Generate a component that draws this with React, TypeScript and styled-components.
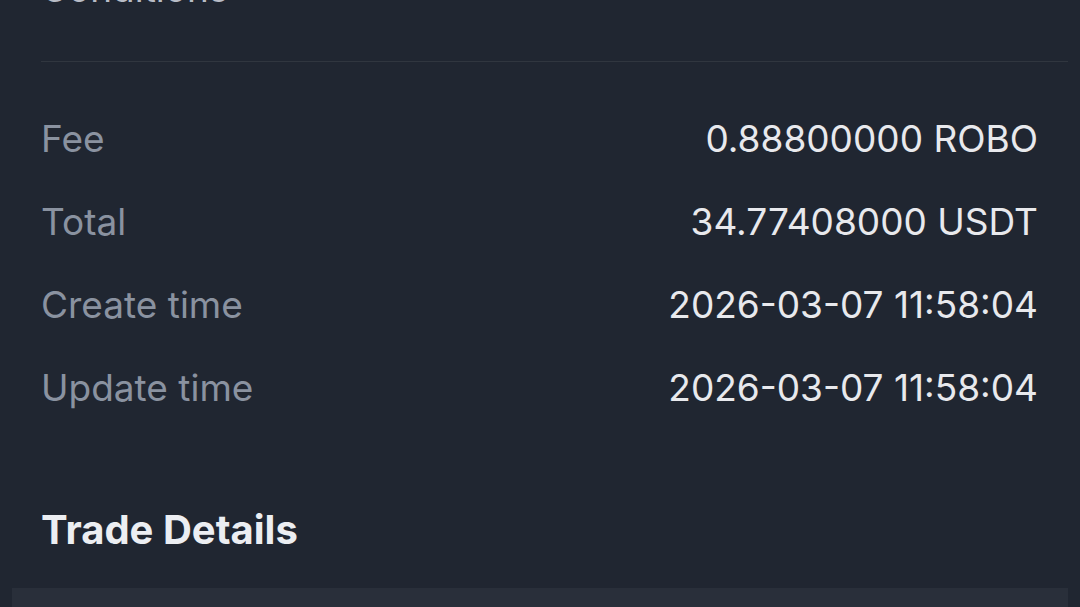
import React from 'react';
import styled, { createGlobalStyle } from 'styled-components';

const GlobalStyle = createGlobalStyle`
  html, body {
    margin: 0;
    padding: 0;
    background: #202631;
    overflow: hidden;
  }
  body {
    font-family: Inter, "Noto Sans", sans-serif;
  }
`;

const Page = styled.div`
  width: 1080px;
  height: 607px;
  overflow: hidden;
  background: #202631;
`;

const Section = styled.div`
  padding: 0 12px 0 41px;
`;

const SectionTitle = styled.div`
  margin-top: -31px;
  height: 93px;
  box-sizing: border-box;
  font-size: 37px;
  line-height: 40px;
  color: #b8bcc6;
  border-bottom: 1px solid #30363f;
`;

const Rows = styled.div`
  padding: 35px 30px 0 0;
`;

const Row = styled.div`
  height: 83px;
  display: flex;
  align-items: center;
  justify-content: space-between;
  font-size: 37px;
`;

const Label = styled.span`
  color: #8a92a0;
`;

const Value = styled.span`
  color: #e8e9ed;
`;

const Heading = styled.h2`
  margin: 81px 0 0 41px;
  height: 40px;
  line-height: 40px;
  font-size: 40px;
  font-weight: 700;
  color: #eceef2;
`;

const Panel = styled.div`
  margin: 38px 12px 0 12px;
  height: 60px;
  background: #292f3a;
`;

const rows = [
  { label: 'Fee', value: '0.88800000 ROBO' },
  { label: 'Total', value: '34.77408000 USDT' },
  { label: 'Create time', value: '2026-03-07 11:58:04' },
  { label: 'Update time', value: '2026-03-07 11:58:04' },
];

export default function App() {
  return (
    <Page>
      <GlobalStyle />
      <Section>
        <SectionTitle>Conditions</SectionTitle>
        <Rows>
          {rows.map((r) => (
            <Row key={r.label}>
              <Label>{r.label}</Label>
              <Value>{r.value}</Value>
            </Row>
          ))}
        </Rows>
      </Section>
      <Heading>Trade Details</Heading>
      <Panel />
    </Page>
  );
}
